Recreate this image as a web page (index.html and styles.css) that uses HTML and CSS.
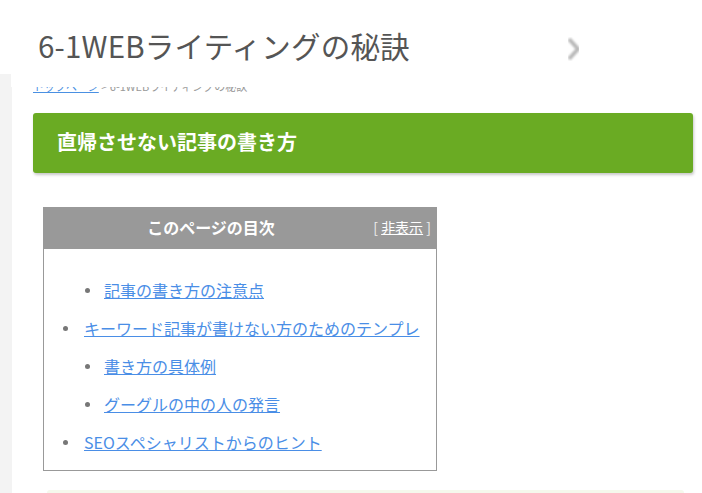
FILE: index.html
```html
<!DOCTYPE html>
<html lang="ja">
<head>
<meta charset="utf-8">
<title>直帰させない記事の書き方</title>
<link rel="stylesheet" href="styles.css">
</head>
<body>
<header class="site-header">
  <h1 class="site-title">6-1WEBライティングの秘訣</h1>
  <svg class="chevron" width="20" height="28" viewBox="0 0 20 28">
    <defs><filter id="soft"><feGaussianBlur stdDeviation="0.8"/></filter></defs>
    <polyline points="5,4 14,14 5,24" fill="none" stroke="#b8b8b8" stroke-width="4" filter="url(#soft)"/>
  </svg>
</header>
<div class="page">
  <div class="gutter"></div>
  <main class="main">
    <div class="breadcrumb"><a href="#">トップページ</a> &gt; 6-1WEBライティングの秘訣</div>
    <h2 class="post-title">直帰させない記事の書き方</h2>
    <div class="toc">
      <div class="toc-head">
        <span class="toc-title">このページの目次</span>
        <span class="toc-toggle">[ <a href="#">非表示</a> ]</span>
      </div>
      <ul class="toc-list">
        <li class="sub"><a href="#">記事の書き方の注意点</a></li>
        <li><a href="#">キーワード記事が書けない方のためのテンプレ</a></li>
        <li class="sub"><a href="#">書き方の具体例</a></li>
        <li class="sub"><a href="#">グーグルの中の人の発言</a></li>
        <li><a href="#">SEOスペシャリストからのヒント</a></li>
      </ul>
    </div>
    <div class="note"></div>
  </main>
</div>
</body>
</html>
```
FILE: styles.css
```css
* { box-sizing: border-box; }
html, body { margin: 0; padding: 0; }
body {
  background: #fff;
  font-family: "Noto Sans CJK JP", "Noto Sans", sans-serif;
  color: #333;
  overflow: hidden;
  height: 493px;
}
.site-header {
  position: absolute;
  top: 0;
  left: 11px;
  right: 0;
  height: 87px;
  background: #fff;
  z-index: 2;
}
.site-title {
  position: absolute;
  left: 27px;
  top: 25px;
  margin: 0;
  font-size: 29.5px;
  font-weight: normal;
  line-height: 40px;
  color: #555;
  letter-spacing: 0.2px;
}
.chevron {
  position: absolute;
  left: 553px;
  top: 35px;
}
.page {
  display: flex;
  height: 493px;
}
.gutter {
  width: 12px;
  margin-top: 74px;
  background: #f3f3f3;
  flex: none;
}
.main {
  flex: 1;
  padding: 78px 9px 0 21px;
}
.breadcrumb {
  font-size: 11px;
  line-height: 16px;
  color: #999;
  height: 20px;
}
.breadcrumb a { color: #4a90e2; }
.post-title {
  margin: 15px 0 0;
  height: 60px;
  background: #6aab23;
  color: #fff;
  font-size: 20px;
  font-weight: bold;
  line-height: 58px;
  padding-left: 24px;
  border-radius: 3px;
  box-shadow: 1px 2px 3px rgba(0,0,0,0.22);
}
.toc {
  margin: 34px 0 0 10px;
  width: 394px;
  border: 1px solid #999;
}
.toc-head {
  position: relative;
  height: 41px;
  background: #999;
  color: #fff;
  text-align: center;
  line-height: 39px;
}
.toc-title {
  font-size: 16px;
  font-weight: bold;
  margin-left: -58px;
}
.toc-toggle {
  position: absolute;
  right: 5px;
  top: 0;
  font-size: 14px;
  color: #eee;
}
.toc-toggle a { color: #fff; }
.toc-list {
  list-style: none;
  margin: 0;
  padding: 29px 0 2px;
}
.toc-list li {
  position: relative;
  font-size: 16px;
  line-height: 24px;
  margin-bottom: 14px;
  padding-left: 40px;
  white-space: nowrap;
}
.toc-list li.sub { padding-left: 60px; }
.toc-list li::before {
  content: "";
  position: absolute;
  left: 19px;
  top: 10px;
  width: 5px;
  height: 5px;
  border-radius: 50%;
  background: #777;
}
.toc-list li.sub::before { left: 41px; }
.toc-list a { color: #4a8ee6; }
.note {
  margin: 19px 9px 0 14px;
  height: 3px;
  background: #f5f8ec;
  border-radius: 5px 5px 0 0;
}
```
